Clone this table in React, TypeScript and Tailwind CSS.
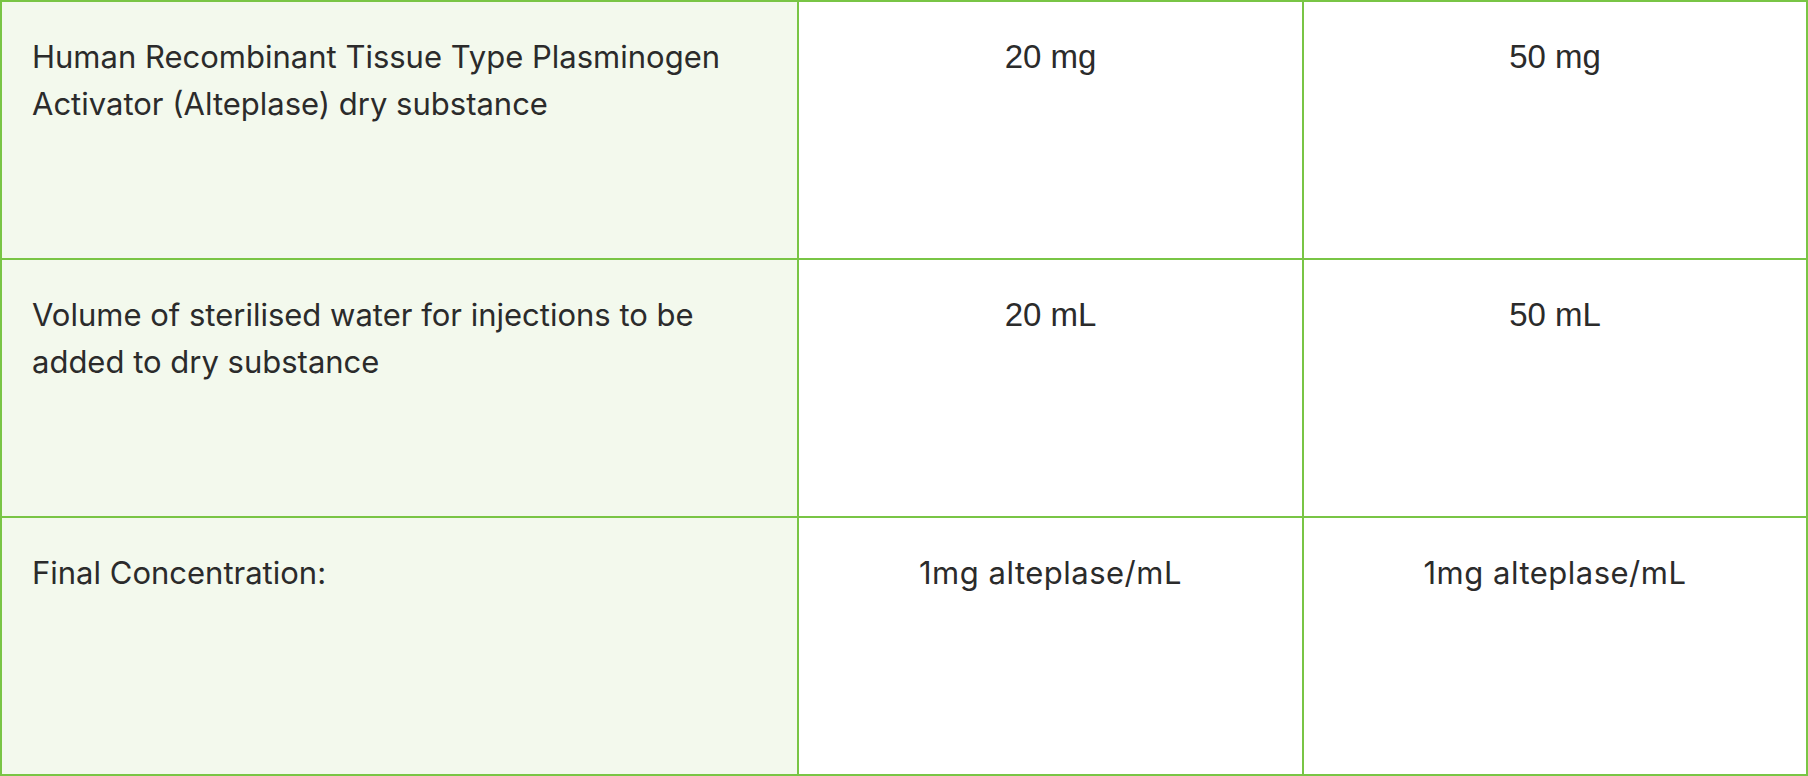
const rows = [
  { label: 'Human Recombinant Tissue Type Plasminogen Activator (Alteplase) dry substance', a: '20 mg', b: '50 mg', arial: true },
  { label: 'Volume of sterilised water for injections to be added to dry substance', a: '20 mL', b: '50 mL', arial: true },
  { label: 'Final Concentration:', a: '1mg alteplase/mL', b: '1mg alteplase/mL', arial: false },
];

export default function App() {
  return (
    <div className="w-[1808px] h-[776px] bg-white text-[#2b2b2b]">
      <div className="grid grid-cols-[797px_505px_504px] border-t-2 border-l-2 border-[#79c545]">
        {rows.map(r => (
          <div key={r.label} className="contents">
            <div className="h-[258px] border-r-2 border-b-2 border-[#79c545] bg-[#f3f9ed] pl-[30px] pr-[40px] pt-[31px] text-[31px] leading-[47px] font-['Inter',sans-serif]">
              {r.label}
            </div>
            {[r.a, r.b].map((v, i) => (
              <div key={i} className={`h-[258px] border-r-2 border-b-2 border-[#79c545] pt-[31px] text-center leading-[47px] ${r.arial ? "text-[33px] font-['Liberation_Sans',Arial,sans-serif]" : "text-[31px] tracking-[0.5px] font-['Inter',sans-serif]"}`}>
                {v}
              </div>
            ))}
          </div>
        ))}
      </div>
    </div>
  );
}
